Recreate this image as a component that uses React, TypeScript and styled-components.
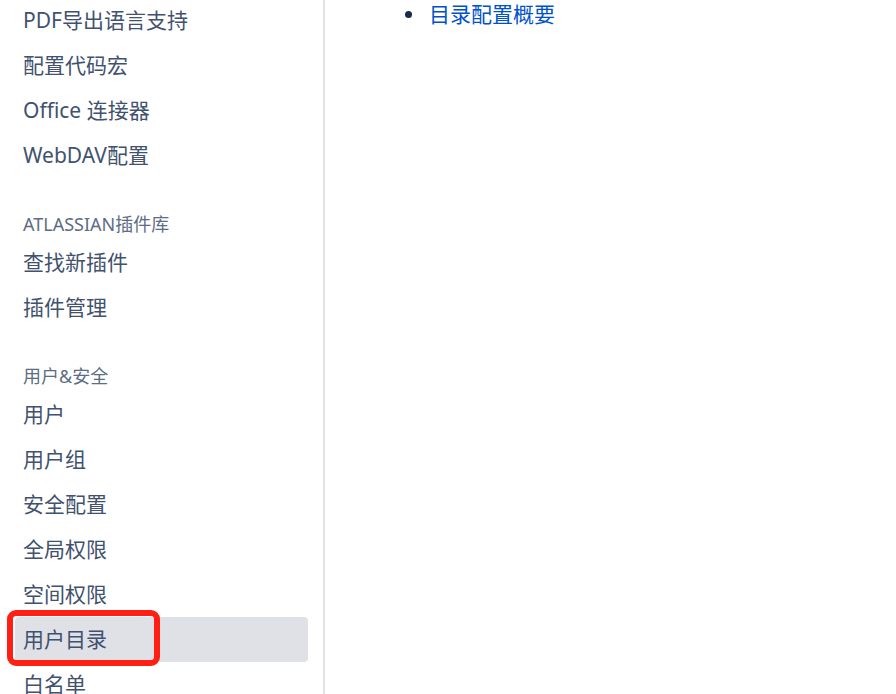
import React from "react";
import styled, { createGlobalStyle } from "styled-components";

const GlobalStyle = createGlobalStyle`
  html, body {
    margin: 0;
    padding: 0;
    background: #ffffff;
    overflow: hidden;
  }
  body {
    font-family: "Noto Sans", "Noto Sans CJK SC", sans-serif;
  }
  * { box-sizing: border-box; }
`;

const Page = styled.div`
  display: flex;
  width: 896px;
  height: 694px;
  overflow: hidden;
`;

const Sidebar = styled.nav`
  width: 325px;
  flex-shrink: 0;
  height: 100%;
  border-right: 2px solid #e1e2e6;
  padding: 0 15px;
  overflow: hidden;
`;

const NavList = styled.div`
  display: flex;
  flex-direction: column;
  margin-top: -2px;
`;

const GroupHeader = styled.div`
  padding: 34px 8px 4px;
  height: 62px;
  line-height: 24px;
  font-size: 18px;
  color: #5e6c84;
  white-space: nowrap;
`;

const NavItem = styled.div<{ $active?: boolean }>`
  position: relative;
  height: 45px;
  display: flex;
  align-items: center;
  padding: 0 8px 4px;
  font-size: 21px;
  color: #42526e;
  white-space: nowrap;
  border-radius: 4px;
  background: ${(p) => (p.$active ? "#dfe1e6" : "transparent")};
`;

const Highlight = styled.div`
  position: absolute;
  left: -8px;
  top: -7px;
  width: 153px;
  height: 56px;
  border: 6px solid #ff1f14;
  border-radius: 9px;
  pointer-events: none;
`;

const Content = styled.main`
  flex: 1;
  padding: 0 0 0 80px;
`;

const BulletList = styled.ul`
  list-style: none;
  margin: 0;
  padding: 0;
`;

const BulletItem = styled.li`
  display: flex;
  align-items: center;
  height: 30px;
  gap: 17px;
  padding-bottom: 1px;
  &::before {
    content: "";
    width: 7px;
    height: 7px;
    border-radius: 50%;
    background: #172b4d;
    flex-shrink: 0;
  }
`;

const Link = styled.a`
  font-size: 21px;
  color: #0052cc;
  text-decoration: none;
  margin-top: -3px;
`;

type Entry = { kind: "header" | "item"; label: string; active?: boolean };

const entries: Entry[] = [
  { kind: "item", label: "PDF导出语言支持" },
  { kind: "item", label: "配置代码宏" },
  { kind: "item", label: "Office 连接器" },
  { kind: "item", label: "WebDAV配置" },
  { kind: "header", label: "ATLASSIAN插件库" },
  { kind: "item", label: "查找新插件" },
  { kind: "item", label: "插件管理" },
  { kind: "header", label: "用户&安全" },
  { kind: "item", label: "用户" },
  { kind: "item", label: "用户组" },
  { kind: "item", label: "安全配置" },
  { kind: "item", label: "全局权限" },
  { kind: "item", label: "空间权限" },
  { kind: "item", label: "用户目录", active: true },
  { kind: "item", label: "白名单" },
];

export default function App() {
  return (
    <>
      <GlobalStyle />
      <Page>
        <Sidebar>
          <NavList>
            {entries.map((e, i) =>
              e.kind === "header" ? (
                <GroupHeader key={i}>{e.label}</GroupHeader>
              ) : (
                <NavItem key={i} $active={e.active}>
                  {e.label}
                  {e.active && <Highlight />}
                </NavItem>
              )
            )}
          </NavList>
        </Sidebar>
        <Content>
          <BulletList>
            <BulletItem>
              <Link href="#">目录配置概要</Link>
            </BulletItem>
          </BulletList>
        </Content>
      </Page>
    </>
  );
}
